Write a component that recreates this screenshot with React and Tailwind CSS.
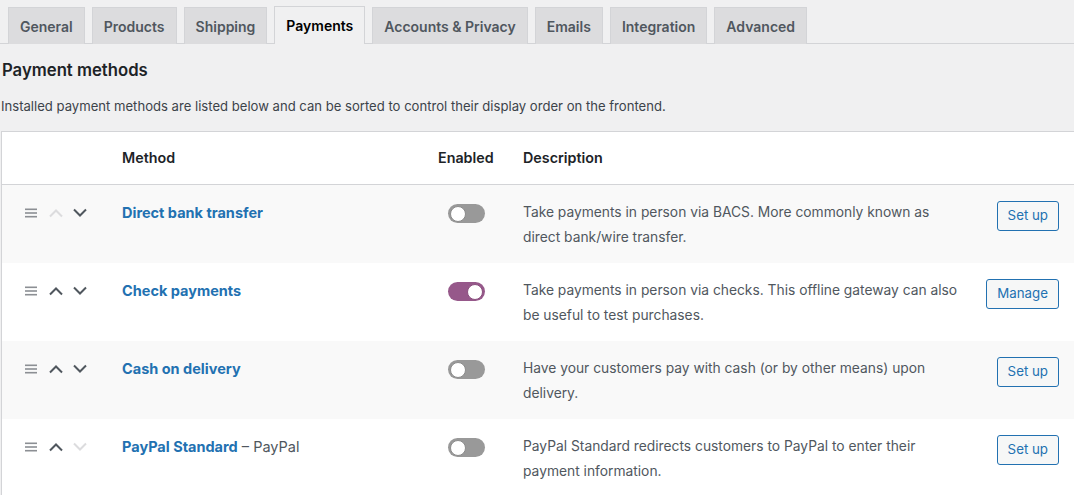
import React from "react";

const tabs = ["General", "Products", "Shipping", "Payments", "Accounts & Privacy", "Emails", "Integration", "Advanced"];

const rows = [
  { name: "Direct bank transfer", desc: ["Take payments in person via BACS. More commonly known as", "direct bank/wire transfer."], on: false, btn: "Set up", up: false, down: true, bg: "bg-[#f9f9f9]" },
  { name: "Check payments", desc: ["Take payments in person via checks. This offline gateway can also", "be useful to test purchases."], on: true, btn: "Manage", up: true, down: true, bg: "bg-white" },
  { name: "Cash on delivery", desc: ["Have your customers pay with cash (or by other means) upon", "delivery."], on: false, btn: "Set up", up: true, down: true, bg: "bg-[#f9f9f9]" },
  { name: "PayPal Standard", extra: "PayPal", desc: ["PayPal Standard redirects customers to PayPal to enter their", "payment information."], on: false, btn: "Set up", up: true, down: false, bg: "bg-white" },
];

function Chevron({ dir, active }) {
  return (
    <svg width="16" height="10" viewBox="0 0 16 10" className={active ? "text-[#50575e]" : "text-[#dcdcde]"}>
      {dir === "up" ? (
        <path d="M2 8.5 L8 2.5 L14 8.5" fill="none" stroke="currentColor" strokeWidth="2" />
      ) : (
        <path d="M2 1.5 L8 7.5 L14 1.5" fill="none" stroke="currentColor" strokeWidth="2" />
      )}
    </svg>
  );
}

function Handle() {
  return (
    <svg width="12" height="10" viewBox="0 0 12 10" className="text-[#8c8f94]">
      <rect x="0" y="0.5" width="12" height="1.6" fill="currentColor" />
      <rect x="0" y="4.2" width="12" height="1.6" fill="currentColor" />
      <rect x="0" y="7.9" width="12" height="1.6" fill="currentColor" />
    </svg>
  );
}

function Toggle({ on }) {
  return (
    <div className={`w-[37px] h-[19px] rounded-full flex items-center px-[2px] ${on ? "bg-[#96588a] justify-end" : "bg-[#999999] justify-start"}`}>
      <div className={`w-[16px] h-[16px] rounded-full bg-white border ${on ? "border-[#8a4f7e]" : "border-[#8c8c8c]"}`} />
    </div>
  );
}

export default function App() {
  return (
    <div className="w-[1074px] h-[495px] overflow-hidden bg-[#f0f0f1] text-[#3c434a]" style={{ fontFamily: "Inter, 'Noto Sans', sans-serif" }}>
      <div className="flex items-end gap-[7px] pl-[8px] pt-[7px] border-b border-[#d3d4d7] h-[44px]">
        {tabs.map((t) => {
          const active = t === "Payments";
          return (
            <div
              key={t}
              className={`h-[37px] px-[11px] flex items-center text-[14px] font-semibold border border-b-0 -mb-px ${
                active ? "bg-[#f0f0f1] text-[#000] border-[#d3d4d7] h-[38px]" : "bg-[#dcdcde] text-[#50575e] border-[#d3d4d7]"
              }`}
            >
              {t}
            </div>
          );
        })}
      </div>
      <h2 className="mt-[14px] ml-[2px] text-[16.7px] font-semibold text-[#1d2327] leading-[24px]">Payment methods</h2>
      <p className="mt-[14px] ml-[1px] text-[13.1px] leading-[20px] text-[#3c434a]">
        Installed payment methods are listed below and can be sorted to control their display order on the frontend.
      </p>
      <div className="mt-[15px] ml-[1px] w-[1080px] bg-white border-l border-t border-[#d3d4d7]">
        <div className="grid grid-cols-[120px_317px_84px_462px_1fr] h-[53px] items-center border-b border-[#d3d4d7] text-[14.3px] font-semibold text-[#1d2327]">
          <div />
          <div>Method</div>
          <div className="-ml-[1px]">Enabled</div>
          <div>Description</div>
          <div />
        </div>
        {rows.map((r, i) => (
          <div key={i} className={`grid grid-cols-[120px_317px_84px_462px_1fr] h-[78px] items-start ${r.bg}`}>
            <div className="flex items-center pl-[23px] pt-[23px] gap-[11px]">
              <Handle />
              <div className="flex items-center gap-[8px]">
                <Chevron dir="up" active={r.up} />
                <Chevron dir="down" active={r.down} />
              </div>
            </div>
            <div className="pt-[15px] leading-[25px] text-[14.5px]">
              <span className="font-bold text-[#2271b1]">{r.name}</span>
              {r.extra && <span className="text-[#50575e]"> – {r.extra}</span>}
            </div>
            <div className="pt-[19px] pl-[9px]">
              <Toggle on={r.on} />
            </div>
            <div className="pt-[15px] text-[13.8px] leading-[25px] text-[#50575e] whitespace-nowrap">
              <div>{r.desc[0]}</div>
              <div>{r.desc[1]}</div>
            </div>
            <div className="flex justify-end pr-[22px] pt-[16px]">
              <button className="h-[30px] px-[10px] text-[13.3px] text-[#2271b1] bg-[#f6f7f7] border border-[#2271b1] rounded-[3px]">
                {r.btn}
              </button>
            </div>
          </div>
        ))}
      </div>
    </div>
  );
}
